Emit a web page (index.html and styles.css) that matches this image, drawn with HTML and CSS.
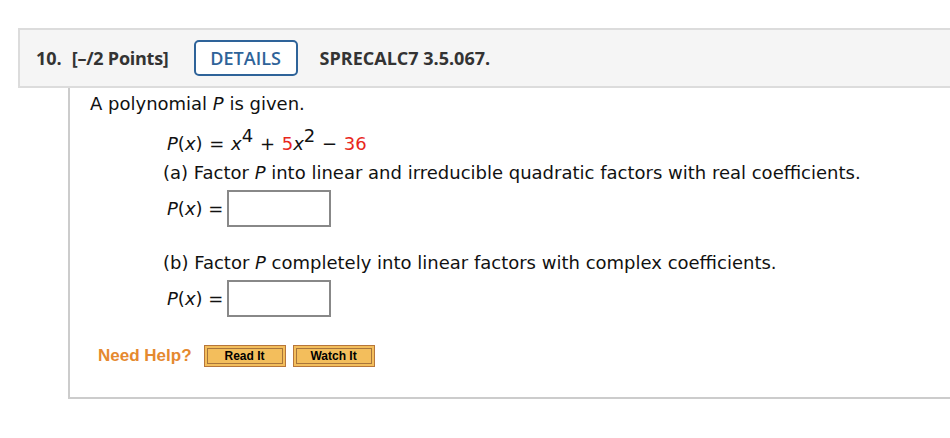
FILE: index.html
```html
<!DOCTYPE html>
<html>
<head>
<meta charset="utf-8">
<link rel="stylesheet" href="styles.css">
</head>
<body>
<div class="page">
  <div class="q-header">
    <span class="q-num">10.</span>
    <span class="q-points">[–/2 Points]</span>
    <button class="details">DETAILS</button>
    <span class="q-ref">SPRECALC7 3.5.067.</span>
  </div>
  <div class="q-body">
    <p class="intro">A polynomial <i>P</i> is given.</p>
    <div class="indent">
      <p class="formula"><i>P</i>(<i>x</i>) = <i>x</i><sup>4</sup> + <span class="red">5</span><i>x</i><sup>2</sup> − <span class="red">36</span></p>
      <p class="part">(a) Factor <i>P</i> into linear and irreducible quadratic factors with real coefficients.</p>
      <div class="answer"><span><i>P</i>(<i>x</i>) =</span><span class="box"></span></div>
      <p class="part part-b">(b) Factor <i>P</i> completely into linear factors with complex coefficients.</p>
      <div class="answer"><span><i>P</i>(<i>x</i>) =</span><span class="box"></span></div>
    </div>
    <div class="help">
      <span class="need">Need Help?</span>
      <button class="hbtn">Read It</button>
      <button class="hbtn">Watch It</button>
    </div>
  </div>
</div>
</body>
</html>
```

FILE: styles.css
```css
html, body {
  margin: 0;
  padding: 0;
  background: #fff;
  overflow: hidden;
}
.page {
  padding: 28px 0 0 18px;
}
.q-header {
  display: flex;
  align-items: center;
  height: 56px;
  background: #f5f5f5;
  border: 2px solid #dcdcdc;
  border-right: none;
  padding-left: 16px;
  font-family: "Open Sans", sans-serif;
  font-weight: 700;
  font-size: 18px;
  color: #333;
}
.q-points {
  margin-left: 10px;
  letter-spacing: -0.25px;
}
.details {
  margin-left: 25px;
  height: 36px;
  width: 104px;
  border: 2px solid #2e6399;
  border-radius: 5px;
  background: #fff;
  color: #2e6399;
  font-family: "Open Sans", sans-serif;
  font-weight: 600;
  font-size: 18px;
  padding: 0;
}
.q-ref {
  margin-left: 22px;
}
.q-body {
  margin-left: 50px;
  border-left: 2px solid #cccccc;
  border-bottom: 2px solid #cccccc;
  height: 309px;
  font-family: "DejaVu Sans", Verdana, sans-serif;
  font-size: 18px;
  color: #111;
  padding-left: 20px;
}
p { margin: 0; }
.intro {
  padding-top: 4px;
  line-height: 24px;
}
.indent {
  padding-left: 77px;
}
.formula {
  margin-top: 16px;
  line-height: 24px;
  word-spacing: 1px;
}
sup {
  font-size: 18px;
  line-height: 0;
  vertical-align: 8px;
}
.red { color: #e8271c; }
.part {
  margin-top: 5px;
  line-height: 24px;
  margin-left: -4px;
}
.part-b {
  margin-top: 24px;
}
.answer {
  display: flex;
  align-items: center;
  gap: 4px;
  margin-top: 5px;
}
.box {
  display: inline-block;
  width: 100px;
  height: 33px;
  border: 2px solid #888;
  background: #fff;
}
.help {
  display: flex;
  align-items: center;
  margin-top: 28px;
  margin-left: 8px;
}
.need {
  font-family: "Liberation Sans", Arial, sans-serif;
  font-weight: 700;
  font-size: 17px;
  color: #e5892f;
  margin-right: 12px;
}
.hbtn {
  width: 82px;
  height: 22px;
  margin-right: 7px;
  background: #f3be5c;
  border: 1px solid #b7763a;
  box-shadow: inset 0 0 0 2px #f3be5c, inset 0 0 0 3px #a8753a;
  font-family: "Liberation Sans", Arial, sans-serif;
  font-weight: 700;
  font-size: 12px;
  color: #000;
  padding: 0;
}
```
